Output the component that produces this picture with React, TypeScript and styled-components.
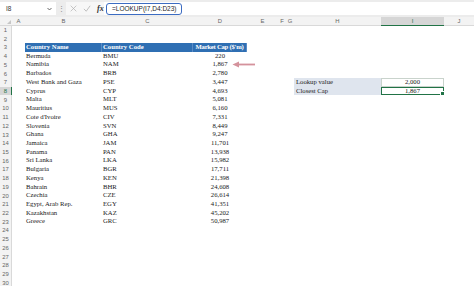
import React from 'react';
import styled, { createGlobalStyle, css } from 'styled-components';

const GlobalStyle = createGlobalStyle`
  html, body {
    margin: 0;
    padding: 0;
    background: #ffffff;
    overflow: hidden;
  }
  body {
    width: 474px;
    height: 286px;
  }
`;

const UI_FONT = `"Liberation Sans", Arial, sans-serif`;
const CELL_FONT = `"Liberation Serif", "Times New Roman", serif`;

const COLUMNS = [
  { id: '', w: '12px' },
  { id: 'A', w: '13px' },
  { id: 'B', w: '77px' },
  { id: 'C', w: '91px' },
  { id: 'D', w: '54px' },
  { id: 'E', w: '31px' },
  { id: 'F', w: '8px' },
  { id: 'G', w: '8px' },
  { id: 'H', w: '87px' },
  { id: 'I', w: '63px' },
  { id: 'J', w: '1fr' },
];

const countries: [string, string, string][] = [
  ['Bermuda', 'BMU', '220'],
  ['Namibia', 'NAM', '1,867'],
  ['Barbados', 'BRB', '2,780'],
  ['West Bank and Gaza', 'PSE', '3,447'],
  ['Cyprus', 'CYP', '4,693'],
  ['Malta', 'MLT', '5,081'],
  ['Mauritius', 'MUS', '6,160'],
  ["Cote d'Ivoire", 'CIV', '7,331'],
  ['Slovenia', 'SVN', '8,449'],
  ['Ghana', 'GHA', '9,247'],
  ['Jamaica', 'JAM', '11,701'],
  ['Panama', 'PAN', '13,938'],
  ['Sri Lanka', 'LKA', '15,982'],
  ['Bulgaria', 'BGR', '17,711'],
  ['Kenya', 'KEN', '21,398'],
  ['Bahrain', 'BHR', '24,608'],
  ['Czechia', 'CZE', '26,614'],
  ['Egypt, Arab Rep.', 'EGY', '41,351'],
  ['Kazakhstan', 'KAZ', '45,202'],
  ['Greece', 'GRC', '50,987'],
];

const ACTIVE_ROW = 8;
const ACTIVE_COL = 'I';

/* ---------- formula bar ---------- */

const FormulaBar = styled.div`
  display: flex;
  align-items: center;
  height: 17px;
  padding: 2px 0 2px 0;
  box-sizing: border-box;
  background: #ececec;
  font-family: ${UI_FONT};
`;

const NameBox = styled.div`
  display: flex;
  align-items: center;
  justify-content: space-between;
  width: 56px;
  height: 100%;
  box-sizing: border-box;
  padding: 0 4px 0 6px;
  background: #ffffff;
  font-size: 6.5px;
  color: #333;
`;

const Chevron = styled.svg`
  width: 5px;
  height: 4px;
`;

const Dots = styled.div`
  width: 10px;
  text-align: center;
  font-size: 7px;
  color: #8a8a8a;
  line-height: 1;
`;

const IconGroup = styled.div`
  display: flex;
  align-items: center;
  gap: 6px;
  width: 38px;
  height: 100%;
  padding-left: 4px;
  box-sizing: border-box;
  background: #f7f7f7;
`;

const Fx = styled.span`
  font-family: ${CELL_FONT};
  font-style: italic;
  font-weight: bold;
  font-size: 8px;
  color: #333;
`;

const FormulaInput = styled.div`
  flex: 1;
  display: flex;
  align-items: center;
  height: 100%;
  padding-left: 2px;
  background: #ffffff;
`;

const FormulaText = styled.div`
  height: 12px;
  box-sizing: border-box;
  display: flex;
  align-items: center;
  padding: 0 5px;
  border: 1.3px solid #3c6cc2;
  border-radius: 3px;
  font-size: 6.5px;
  color: #1f1f1f;
  white-space: nowrap;
`;

/* ---------- sheet ---------- */

const Sheet = styled.div`
  position: relative;
  display: grid;
  grid-template-columns: ${COLUMNS.map((c) => c.w).join(' ')};
  grid-template-rows: 8.6px;
  grid-auto-rows: 8.72px;
`;

const Heading = styled.div<{ $selected?: boolean; $side: 'top' | 'left' }>`
  display: flex;
  align-items: center;
  justify-content: center;
  background: #f3f3f3;
  font-family: ${UI_FONT};
  font-size: 5.9px;
  color: #666666;
  box-sizing: border-box;
  ${(p) =>
    p.$side === 'top'
      ? css`
          border-bottom: 1px solid #d9d9d9;
        `
      : css`
          border-right: 1px solid #d9d9d9;
        `}
  ${(p) =>
    p.$selected &&
    css`
      background: #d6d6d6;
      color: #217346;
      ${p.$side === 'top'
        ? 'border-bottom: 1.5px solid #217346;'
        : 'border-right: 1.5px solid #217346;'}
    `}
`;

const Corner = styled(Heading)`
  position: relative;
  &::after {
    content: '';
    position: absolute;
    right: 1px;
    bottom: 1px;
    border-left: 4px solid transparent;
    border-bottom: 4px solid #c6c6c6;
  }
`;

type Variant = 'plain' | 'head' | 'label' | 'input' | 'active';

const Cell = styled.div<{ $variant?: Variant; $align?: 'left' | 'center' }>`
  position: relative;
  display: flex;
  align-items: center;
  justify-content: ${(p) => (p.$align === 'center' ? 'center' : 'flex-start')};
  padding: 0 1px;
  box-sizing: border-box;
  min-width: 0;
  font-family: ${CELL_FONT};
  font-size: 6.7px;
  line-height: 1;
  color: #1a1a1a;
  white-space: nowrap;
  ${(p) =>
    p.$variant === 'head' &&
    css`
      background: #2f6fb3;
      color: #ffffff;
      font-weight: bold;
      border-right: 0.5px solid #5a8cc6;
    `}
  ${(p) =>
    p.$variant === 'label' &&
    css`
      background: #dfe5ee;
      padding-left: 2px;
    `}
  ${(p) =>
    p.$variant === 'input' &&
    css`
      border: 1px solid #c9d3cc;
    `}
  ${(p) =>
    p.$variant === 'active' &&
    css`
      border: 1.5px solid #217346;
      &::after {
        content: '';
        position: absolute;
        right: -2px;
        bottom: -2px;
        width: 3px;
        height: 3px;
        background: #217346;
        border: 0.5px solid #fff;
      }
    `}
`;

const HeaderText = styled.span<{ $tight?: boolean }>`
  letter-spacing: ${(p) => (p.$tight ? '-0.25px' : '0')};
`;

const Arrow = styled.svg`
  position: absolute;
  left: 232px;
  top: 44.3px;
  width: 24px;
  height: 7px;
`;

type CellSpec = { text?: string; variant?: Variant; align?: 'left' | 'center' };

function cellsForRow(r: number): Record<string, CellSpec> {
  const out: Record<string, CellSpec> = {};
  if (r === 3) {
    out.B = { text: 'Country Name', variant: 'head' };
    out.C = { text: 'Country Code', variant: 'head' };
    out.D = { text: "Market Cap ($'m)", variant: 'head', align: 'center' };
  }
  if (r >= 4 && r < 4 + countries.length) {
    const [name, code, cap] = countries[r - 4];
    out.B = { text: name };
    out.C = { text: code };
    out.D = { text: cap, align: 'center' };
  }
  if (r === 7) {
    out.H = { text: 'Lookup value', variant: 'label' };
    out.I = { text: '2,000', variant: 'input', align: 'center' };
  }
  if (r === 8) {
    out.H = { text: 'Closest Cap', variant: 'label' };
    out.I = { text: '1,867', variant: 'active', align: 'center' };
  }
  return out;
}

const App: React.FC = () => {
  const rows = Array.from({ length: 30 }, (_, i) => i + 1);
  const letters = COLUMNS.slice(1).map((c) => c.id);

  return (
    <>
      <GlobalStyle />
      <FormulaBar>
        <NameBox>
          <span>I8</span>
          <Chevron viewBox="0 0 10 6">
            <path d="M1 1 L5 5 L9 1" fill="none" stroke="#444" strokeWidth="1.6" />
          </Chevron>
        </NameBox>
        <Dots>⋮</Dots>
        <IconGroup>
          <svg width="7" height="7" viewBox="0 0 10 10">
            <path d="M1 1 L9 9 M9 1 L1 9" stroke="#b0b0b0" strokeWidth="1" fill="none" />
          </svg>
          <svg width="8" height="7" viewBox="0 0 10 9">
            <path d="M1 5 L4 8 L9 1" stroke="#b0b0b0" strokeWidth="1" fill="none" />
          </svg>
          <Fx>fx</Fx>
        </IconGroup>
        <FormulaInput>
          <FormulaText>=LOOKUP(I7,D4:D23)</FormulaText>
        </FormulaInput>
      </FormulaBar>

      <Sheet>
        <Corner $side="top" />
        {letters.map((l) => (
          <Heading key={l} $side="top" $selected={l === ACTIVE_COL}>
            {l}
          </Heading>
        ))}

        {rows.map((r) => {
          const specs = cellsForRow(r);
          return (
            <React.Fragment key={r}>
              <Heading $side="left" $selected={r === ACTIVE_ROW}>
                {r}
              </Heading>
              {letters.map((l) => {
                const s = specs[l];
                return (
                  <Cell key={l} $variant={s?.variant} $align={s?.align}>
                    {s?.text && (
                      <HeaderText $tight={l === 'D' && s.variant === 'head'}>{s.text}</HeaderText>
                    )}
                  </Cell>
                );
              })}
            </React.Fragment>
          );
        })}

        <Arrow viewBox="0 0 24 7">
          <path d="M6 3.5 H23" stroke="#d4929c" strokeWidth="1.8" />
          <path d="M0.5 3.5 L7 0.5 L7 6.5 Z" fill="#d4929c" />
        </Arrow>
      </Sheet>
    </>
  );
};

export default App;
